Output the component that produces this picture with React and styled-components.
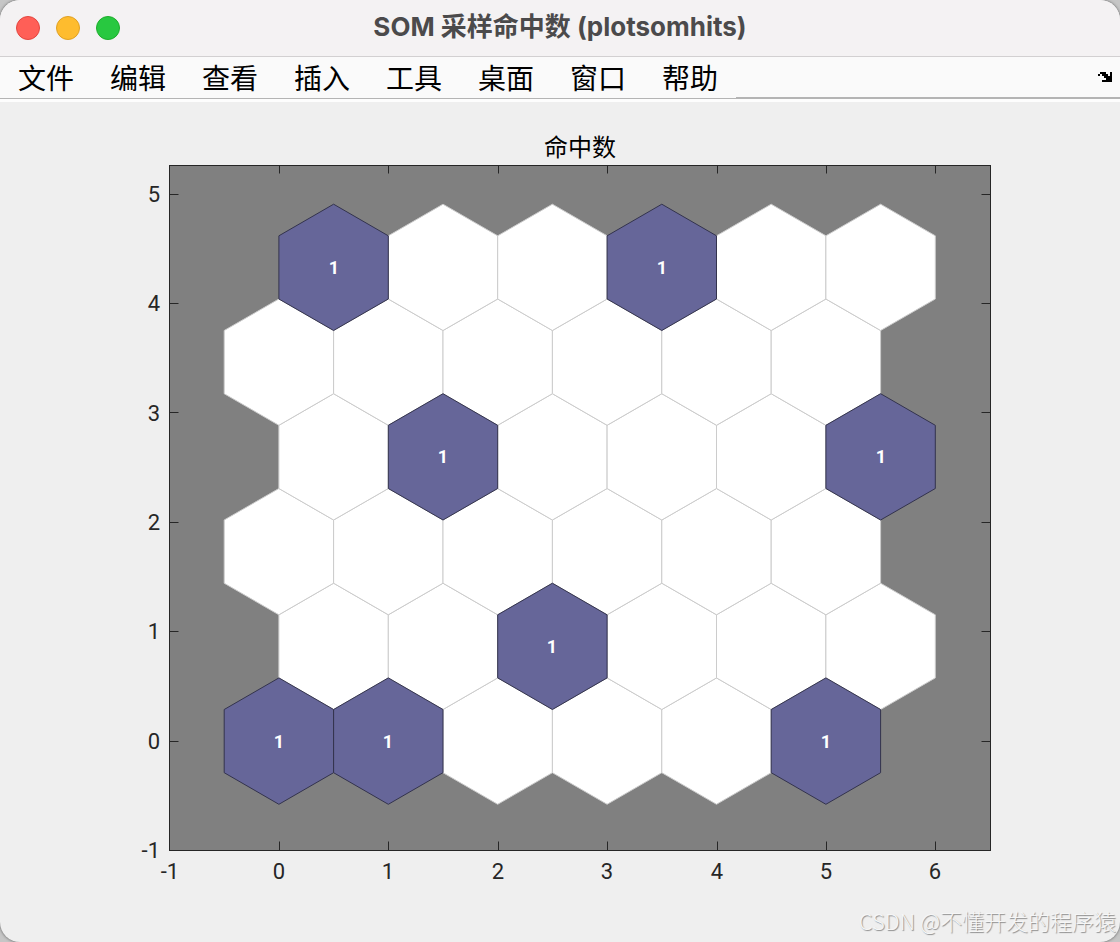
import React from "react";
import styled, { createGlobalStyle } from "styled-components";

const GlobalStyle = createGlobalStyle`
  * {
    box-sizing: border-box;
  }

  body {
    margin: 0;
    background: #c6c6c6;
    font-family: Inter, "Noto Sans CJK SC", sans-serif;
  }
`;

const Window = styled.div`
  position: relative;
  display: flex;
  flex-direction: column;
  min-height: 100vh;
  overflow: hidden;
  border-radius: 20px;
  background: #efefef;
  box-shadow: 0 0 3px #555;
`;

const TitleBar = styled.header`
  display: grid;
  grid-template-columns: 1fr auto 1fr;
  align-items: center;
  height: 57px;
  padding: 0 16px;
  border-bottom: 1px solid #d2d0d1;
  background: #f4f2f3;
`;

const Lights = styled.div`
  display: flex;
  gap: 16px;
`;

const Light = styled.button`
  width: 24px;
  height: 24px;
  padding: 0;
  border: 1px solid ${props => props.$edge};
  border-radius: 50%;
  background: ${props => props.$fill};
`;

const Title = styled.h1`
  margin: 0;
  padding-bottom: 2px;
  color: #4b4a4b;
  font-size: 26px;
  font-weight: 700;
  font-variation-settings: "opsz" 14;
  line-height: 32px;
`;

const MenuBar = styled.nav`
  display: flex;
  height: 45px;
  border-bottom: 3px solid #fdfdfd;
  background: #fafafa;
`;

const MenuItems = styled.div`
  display: flex;
  align-items: flex-start;
  gap: 36px;
  padding: 0 18px;
  border-bottom: 1px solid #b4b4b4;
`;

const MenuItem = styled.button`
  padding: 0;
  border: none;
  background: none;
  color: #000;
  font-family: "Noto Sans CJK SC", sans-serif;
  font-size: 28px;
  line-height: 40px;
`;

const MenuRest = styled.div`
  display: flex;
  flex: 1;
  align-items: center;
  justify-content: flex-end;
  padding-right: 8px;
  border-bottom: 2px solid #b4b4b4;
`;

const DockButton = styled.button`
  display: flex;
  padding: 0;
  border: none;
  background: none;
`;

const Figure = styled.main`
  flex: 1;

  svg {
    display: block;
    width: 100%;
    height: auto;
  }
`;

const AxisText = styled.text`
  fill: #262626;
  font-family: Roboto, sans-serif;
  font-size: 22px;
  text-anchor: ${props => props.$anchor};
`;

const PlotTitle = styled.text`
  fill: #000;
  font-family: "Noto Sans CJK SC", sans-serif;
  font-size: 24px;
  text-anchor: middle;
`;

const HitText = styled.text`
  fill: #fff;
  font-family: Roboto, sans-serif;
  font-size: 18px;
  font-weight: 700;
  text-anchor: middle;
`;

const Watermark = styled.p`
  position: absolute;
  right: 4px;
  bottom: 6px;
  margin: 0;
  color: #f6f6f6;
  font-family: "Noto Sans CJK SC", sans-serif;
  font-size: 22px;
  font-weight: 300;
  line-height: 32px;
  text-shadow: 1px 1px 1px #8c8c8c;
`;

const lights = [
  { name: "关闭", fill: "#ff5f57", edge: "#e2463f" },
  { name: "最小化", fill: "#febc2e", edge: "#dfa023" },
  { name: "缩放", fill: "#28c840", edge: "#1dad2b" },
];

const menus = ["文件", "编辑", "查看", "插入", "工具", "桌面", "窗口", "帮助"];

// plot area, in svg units
const LEFT = 169.5;
const RIGHT = 990.5;
const TOP = 63.5;
const BOTTOM = 748.5;
const UNIT = 109.4;

const px = x => LEFT + (x + 1) * UNIT;
const py = y => BOTTOM - (y + 1) * UNIT;

// "row,column" of the neurons that were hit
const hits = ["0,0", "0,1", "0,5", "1,2", "3,1", "3,5", "5,0", "5,3"];

const cells = [];
for (let row = 0; row < 6; row++) {
  for (let col = 0; col < 6; col++) {
    cells.push({
      key: `${row},${col}`,
      x: px(col + (row % 2) / 2),
      y: py((row * Math.sqrt(3)) / 2),
      hit: hits.includes(`${row},${col}`),
    });
  }
}

const hexagon = ({ x, y }) => {
  const w = UNIT / 2;
  const r = UNIT / Math.sqrt(3);
  return [
    [x, y - r],
    [x + w, y - r / 2],
    [x + w, y + r / 2],
    [x, y + r],
    [x - w, y + r / 2],
    [x - w, y - r / 2],
  ]
    .map(p => p.map(v => v.toFixed(1)).join(","))
    .join(" ");
};

function Axes() {
  const xs = [-1, 0, 1, 2, 3, 4, 5, 6];
  const ys = [-1, 0, 1, 2, 3, 4, 5];

  return (
    <g>
      <g stroke='#262626' fill='none'>
        <rect x={LEFT} y={TOP} width={RIGHT - LEFT} height={BOTTOM - TOP} />
        {xs.slice(1).map(x => {
          const at = Math.round(px(x)) + 0.5;
          return <path key={x} d={`M${at} ${TOP}v8M${at} ${BOTTOM}v-9`} />;
        })}
        {ys.slice(1).map(y => {
          const at = Math.floor(py(y)) + 0.5;
          return <path key={y} d={`M${LEFT} ${at}h9M${RIGHT} ${at}h-9`} />;
        })}
      </g>
      {xs.map(x => (
        <AxisText key={x} x={Math.round(px(x))} y={777} $anchor='middle'>
          {x}
        </AxisText>
      ))}
      {ys.map(y => (
        <AxisText key={y} x={160} y={Math.floor(py(y) + 0.2) + 8} $anchor='end'>
          {y}
        </AxisText>
      ))}
    </g>
  );
}

function HitsPlot() {
  const empty = cells.filter(c => !c.hit);
  const full = cells.filter(c => c.hit);

  return (
    <svg viewBox='0 0 1120 840' role='img' aria-label='命中数'>
      <PlotTitle x={580} y={54}>
        命中数
      </PlotTitle>
      <rect
        x={LEFT}
        y={TOP}
        width={RIGHT - LEFT}
        height={BOTTOM - TOP}
        fill='#808080'
      />
      {empty.map(c => (
        <polygon key={c.key} points={hexagon(c)} fill='#fff' stroke='#ccc' />
      ))}
      {full.map(c => (
        <g key={c.key}>
          <polygon points={hexagon(c)} fill='#666699' stroke='#33334d' />
          <HitText x={Math.round(c.x)} y={Math.floor(c.y) + 7}>
            1
          </HitText>
        </g>
      ))}
      <Axes />
    </svg>
  );
}

export default function App() {
  return (
    <>
      <GlobalStyle />
      <Window>
        <TitleBar>
          <Lights>
            {lights.map(l => (
              <Light
                key={l.name}
                aria-label={l.name}
                $fill={l.fill}
                $edge={l.edge}
              />
            ))}
          </Lights>
          <Title>SOM 采样命中数 (plotsomhits)</Title>
        </TitleBar>
        <MenuBar>
          <MenuItems>
            {menus.map(m => (
              <MenuItem key={m}>{m}</MenuItem>
            ))}
          </MenuItems>
          <MenuRest>
            <DockButton aria-label='停靠'>
              <svg
                width='14'
                height='10'
                viewBox='0 0 14 10'
                shapeRendering='crispEdges'
              >
                <path d='M2 0h6v2h2v2h2V0h2v10H4V8h4V6H6V4H4V2H2v2H0V2h2z' />
              </svg>
            </DockButton>
          </MenuRest>
        </MenuBar>
        <Figure>
          <HitsPlot />
        </Figure>
        <Watermark>CSDN @不懂开发的程序猿</Watermark>
      </Window>
    </>
  );
}
